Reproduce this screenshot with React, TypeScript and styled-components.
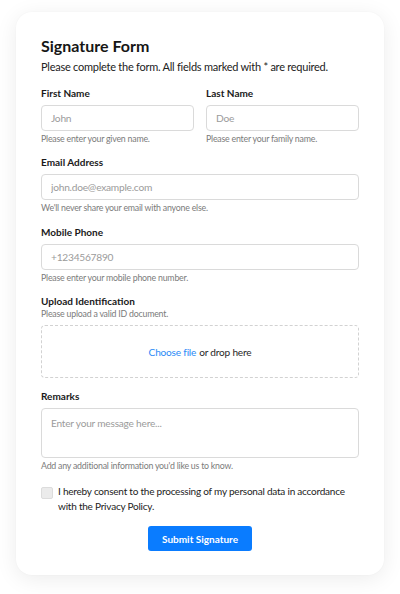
import styled, { createGlobalStyle } from "styled-components";

const GlobalStyle = createGlobalStyle`
    * {
        box-sizing: border-box;
    }
    body {
        margin: 0;
        background: #ffffff;
        font-family: Lato, "Noto Sans", sans-serif;
        color: #1f1f1f;
    }
`;

// Layout
const Page = styled.div`
    padding: 12px 16px 19px;
`;

const Card = styled.form`
    background: #ffffff;
    border-radius: 16px;
    box-shadow: 0 4px 22px rgba(0, 0, 0, 0.08), 0 0 2px rgba(0, 0, 0, 0.03);
    padding: 24px 25px 24px;
`;

const Title = styled.h1`
    margin: 0;
    font-size: 16px;
    line-height: 20px;
    font-weight: 700;
    color: #161616;
`;

const Intro = styled.p`
    margin: 3px 0 10.5px;
    font-size: 11px;
    letter-spacing: -0.25px;
    line-height: 16px;
    color: #222222;
`;

const Row = styled.div`
    display: grid;
    grid-template-columns: 1fr 1fr;
    gap: 12px;
`;

const Field = styled.div`
    display: flex;
    flex-direction: column;
    margin-bottom: 10.5px;
`;

const Label = styled.label`
    font-size: 10px;
    line-height: 14px;
    font-weight: 700;
    color: #1a1a1a;
    margin-bottom: 5px;
`;

const Hint = styled.span<{ $tight?: boolean }>`
    font-size: 8.8px;
    letter-spacing: -0.22px;
    line-height: 12px;
    color: #7b7b7b;
    margin-top: ${(p) => (p.$tight ? "-5px" : "2px")};
`;

const Input = styled.input`
    height: 26px;
    width: 100%;
    border: 1px solid #dadada;
    border-radius: 4px;
    padding: 0 9px;
    font-family: inherit;
    font-size: 10.2px;
    letter-spacing: -0.25px;
    color: #1f1f1f;
    outline: none;

    &::placeholder {
        color: #9b9b9b;
    }
`;

const TextArea = styled.textarea`
    height: 50px;
    width: 100%;
    border: 1px solid #dadada;
    border-radius: 4px;
    padding: 7px 9px;
    font-family: inherit;
    font-size: 10.1px;
    letter-spacing: -0.2px;
    line-height: 14px;
    resize: none;
    outline: none;

    &::placeholder {
        color: #9b9b9b;
    }
`;

const DropZone = styled.div`
    height: 53px;
    margin-top: 5px;
    border: 1px dashed #d2d2d2;
    border-radius: 4px;
    display: flex;
    align-items: center;
    justify-content: center;
    font-size: 10.1px;
    letter-spacing: -0.2px;
    color: #262626;
`;

const FileLink = styled.span`
    color: #2a8af6;
    margin-right: 3px;
`;

const Consent = styled.label`
    display: flex;
    align-items: flex-start;
    gap: 5px;
    margin-top: 12px;
    font-size: 10px;
    letter-spacing: -0.22px;
    line-height: 15px;
    color: #222222;
`;

const CheckBox = styled.input`
    appearance: none;
    flex: none;
    width: 12px;
    height: 12px;
    margin: 3px 0 0;
    background: #ebebeb;
    border: 1px solid #dcdcdc;
    border-radius: 2px;
`;

const Actions = styled.div`
    display: flex;
    justify-content: center;
    margin-top: 12.5px;
`;

const SubmitButton = styled.button`
    height: 25px;
    padding: 0 14px;
    border: none;
    border-radius: 3px;
    background: #0a7cff;
    color: #ffffff;
    font-family: inherit;
    font-size: 10px;
    font-weight: 700;
`;

export default function App() {
    return (
        <>
            <GlobalStyle />
            <Page>
                <Card onSubmit={(e) => e.preventDefault()}>
                    <Title>Signature Form</Title>
                    <Intro>Please complete the form. All fields marked with * are required.</Intro>

                    <Row>
                        <Field>
                            <Label>First Name</Label>
                            <Input placeholder="John" />
                            <Hint>Please enter your given name.</Hint>
                        </Field>
                        <Field>
                            <Label>Last Name</Label>
                            <Input placeholder="Doe" />
                            <Hint>Please enter your family name.</Hint>
                        </Field>
                    </Row>

                    <Field>
                        <Label>Email Address</Label>
                        <Input placeholder="john.doe@example.com" />
                        <Hint>We'll never share your email with anyone else.</Hint>
                    </Field>

                    <Field>
                        <Label>Mobile Phone</Label>
                        <Input placeholder="+1234567890" />
                        <Hint>Please enter your mobile phone number.</Hint>
                    </Field>

                    <Field>
                        <Label>Upload Identification</Label>
                        <Hint $tight>Please upload a valid ID document.</Hint>
                        <DropZone>
                            <FileLink>Choose file</FileLink> or drop here
                        </DropZone>
                    </Field>

                    <Field>
                        <Label>Remarks</Label>
                        <TextArea placeholder="Enter your message here..." />
                        <Hint>Add any additional information you'd like us to know.</Hint>
                    </Field>

                    <Consent>
                        <CheckBox type="checkbox" />
                        <span>
                            I hereby consent to the processing of my personal data in accordance with
                            the Privacy Policy.
                        </span>
                    </Consent>

                    <Actions>
                        <SubmitButton type="submit">Submit Signature</SubmitButton>
                    </Actions>
                </Card>
            </Page>
        </>
    );
}
